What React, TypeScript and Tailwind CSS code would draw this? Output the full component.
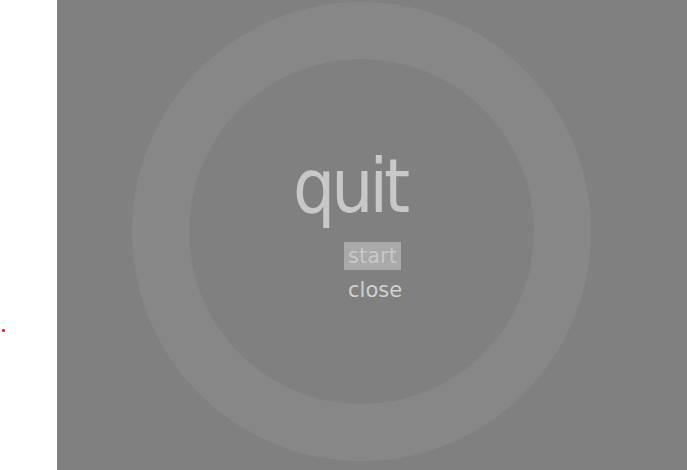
import React from 'react';

const menu = [
  { label: 'start', active: true },
  { label: 'close', active: false },
];

export default function App() {
  return (
    <div className="flex h-[470px] w-[687px] bg-white font-['DejaVu_Sans',sans-serif]">
      {/* left gutter with the cursor marker */}
      <div className="relative w-[57px] shrink-0">
        <div className="absolute left-[2px] top-[329px] h-[3px] w-[3px] rounded-[1px] bg-[#e8212c]" />
      </div>

      {/* game screen */}
      <div className="relative flex-1 overflow-hidden bg-[#808080]">
        <div className="absolute left-[75px] top-[2px] h-[459px] w-[459px] rounded-full border-[57px] border-[#878787]" />

        <div className="relative flex flex-col pl-[236px] pt-[146px]">
          <h1 className="font-['DejaVu_Sans_Condensed','DejaVu_Sans',sans-serif] text-[74px] leading-[80px] tracking-[-4px] text-[#c8c8c8]">
            quit
          </h1>
          <ul className="ml-[51px] mt-[16px] flex flex-col items-start gap-[6px]">
            {menu.map((item) => (
              <li
                key={item.label}
                className={`px-[4px] text-[21px] leading-[28px] ${
                  item.active ? 'bg-[#a9a9a9] text-[#c8c8c8]' : 'text-[#d0d0d0]'
                }`}
              >
                {item.label}
              </li>
            ))}
          </ul>
        </div>
      </div>
    </div>
  );
}
